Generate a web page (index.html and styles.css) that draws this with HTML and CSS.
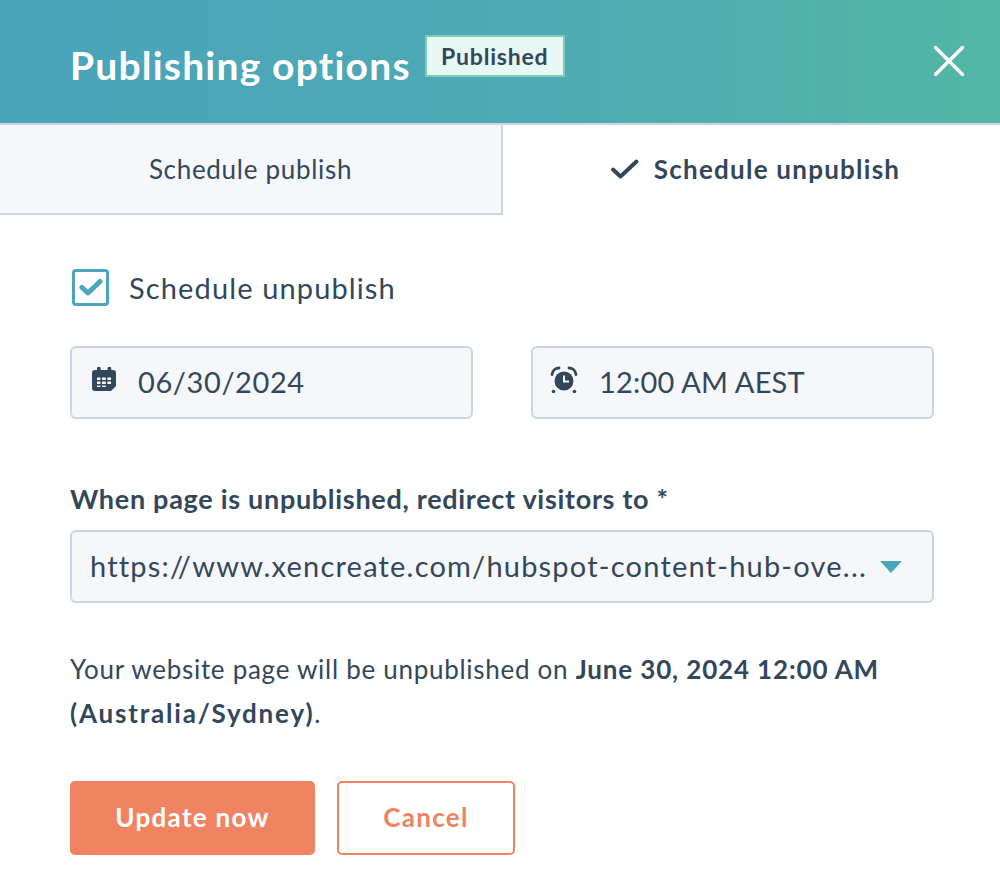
FILE: index.html
```html
<!DOCTYPE html>
<html lang="en">
<head>
<meta charset="utf-8">
<title>Publishing options</title>
<link rel="stylesheet" href="styles.css">
</head>
<body>
<div class="modal">
  <header class="header">
    <h1 class="title">Publishing options</h1>
    <span class="badge">Published</span>
    <svg class="close" viewBox="0 0 30 30" width="30" height="30"><path d="M1.5 1.5L28.5 28.5M28.5 1.5L1.5 28.5" fill="none" stroke="#fff" stroke-width="3.4" stroke-linecap="round"/></svg>
  </header>
  <nav class="tabs">
    <div class="tab tab-inactive">Schedule publish</div>
    <div class="tab tab-active">
      <svg class="tab-check" viewBox="0 0 30 22" width="30" height="22"><path d="M3 11.5L10.5 18.5L26.5 3.5" fill="none" stroke="#33475b" stroke-width="4" stroke-linecap="round" stroke-linejoin="round"/></svg>
      <span>Schedule unpublish</span>
    </div>
  </nav>
  <main class="content">
    <label class="check-row">
      <span class="checkbox">
        <svg viewBox="0 0 24 20" width="24" height="20"><path d="M3 10.5L9 16L21 4.5" fill="none" stroke="#4aa5bd" stroke-width="5" stroke-linecap="round" stroke-linejoin="round"/></svg>
      </span>
      <span class="check-label">Schedule unpublish</span>
    </label>
    <div class="inputs">
      <div class="field">
        <svg class="field-icon" viewBox="0 0 26 26" width="26" height="26"><path fill-rule="evenodd" fill="#33475b" d="M6 1.5a1.8 1.8 0 0 1 3.6 0V3h7V1.500a1.800 1.800 0 0 1 3.600 0V3H22a3 3 0 0 1 3 3v13l-5 5H4a3 3 0 0 1-3-3V6a3 3 0 0 1 3-3h2ZM6 10.500V13h3.500v-2.500ZM11 10.500V13h3.800v-2.500ZM16.300 10.500V13H20v-2.500ZM6 14.500V17h3.500v-2.500ZM11 14.500V17h3.800v-2.500ZM16.300 14.500V17H20v-2.500ZM6 18.500v1.500h3.500v-1.500ZM11 18.500v1.500h3.800v-1.500Z"/></svg>
        <span>06/30/2024</span>
      </div>
      <div class="field field-time">
        <svg class="field-icon" viewBox="0 0 28 28" width="28" height="28"><circle cx="14" cy="15" r="9.500" fill="#33475b"/><path d="M14 9.500V15.500H19" fill="none" stroke="#f6f7fa" stroke-width="2"/><path d="M2 8.500C2.500 4.500 5.500 2 9 2M26 8.500C25.500 4.500 22.500 2 19 2" fill="none" stroke="#33475b" stroke-width="2.800" stroke-linecap="round"/><circle cx="3.500" cy="25.500" r="1.800" fill="#33475b"/><circle cx="24.500" cy="25.500" r="1.800" fill="#33475b"/></svg>
        <span>12:00 AM AEST</span>
      </div>
    </div>
    <div class="field-label">When page is unpublished, redirect visitors to *</div>
    <div class="select">
      <span class="select-value">https://www.xencreate.com/hubspot-content-hub-ove...</span>
      <span class="caret"></span>
    </div>
    <p class="note">Your website page will be unpublished on <strong class="when">June 30, 2024 12:00 AM</strong> <strong class="place">(Australia/Sydney)</strong>.</p>
    <div class="actions">
      <button class="btn btn-primary" type="button">Update now</button>
      <button class="btn btn-secondary" type="button">Cancel</button>
    </div>
  </main>
</div>
</body>
</html>
```

FILE: styles.css
```css
* { box-sizing: border-box; }
html, body { margin: 0; padding: 0; background: #fff; }
body {
  font-family: "Lato", "Noto Sans", sans-serif;
  color: #33475b;
  height: 895px;
  overflow: hidden;
}
.header {
  height: 125px;
  border-bottom: 2px solid #cbd6e2;
  background: linear-gradient(to right, #4aa4bb 0%, #4ea9b4 50%, #53b6a6 100%);
  padding: 0 36px 0 70px;
  display: flex;
  align-items: flex-start;
}
.title {
  margin: 42px 14px 0 0;
  font-size: 39px;
  line-height: 46px;
  font-weight: 700;
  letter-spacing: 1.2px;
  color: #fff;
  white-space: nowrap;
}
.badge {
  margin-top: 35px;
  height: 42px;
  width: 140px;
  border: 2px solid #78cdb5;
  background: #e8f6f6;
  font-size: 23px;
  font-weight: 700;
  letter-spacing: 0.8px;
  line-height: 38px;
  text-align: center;
}
.close { margin: 46px 0 0 auto; }
.tabs { display: flex; height: 90px; }
.tab {
  width: 50%;
  display: flex;
  align-items: center;
  justify-content: center;
  font-size: 26px;
}
.tab-inactive {
  width: 503px;
  background: #f6f7fa;
  border-right: 2px solid #cbd6e2;
  border-bottom: 2px solid #cbd6e2;
  letter-spacing: 0.7px;
}
.tab-active {
  flex: 1;
  font-weight: 700;
  letter-spacing: 1.25px;
  gap: 14px;
  padding: 0 0 2px 7px;
}
.content { padding: 54px 66px 0 70px; }
.check-row { display: flex; align-items: center; height: 36px; }
.checkbox {
  width: 37px;
  height: 37px;
  margin-left: 2px;
  border: 3px solid #4aa5bd;
  border-radius: 4px;
  display: flex;
  align-items: center;
  justify-content: center;
}
.check-label { margin-left: 20px; font-size: 29px; letter-spacing: 1.13px; }
.inputs { display: flex; justify-content: space-between; margin-top: 41px; }
.field {
  width: 403px;
  height: 73px;
  background: #f6f7fa;
  border: 2px solid #cbd6e2;
  border-radius: 6px;
  display: flex;
  align-items: center;
  padding: 0 0 2px 19px;
  gap: 21px;
  font-size: 29px;
  letter-spacing: 0.6px;
}
.field-time { padding-left: 17px; letter-spacing: 0.2px; }
.field-icon { flex: none; margin-top: -4px; }
.field-label {
  margin-top: 65px;
  height: 30px;
  font-size: 27px;
  line-height: 30px;
  font-weight: 700;
  letter-spacing: 0.7px;
}
.select {
  margin-top: 16px;
  height: 73px;
  background: #f6f7fa;
  border: 2px solid #cbd6e2;
  border-radius: 6px;
  display: flex;
  align-items: center;
  padding: 0 30px 2px 18px;
  font-size: 29px;
  letter-spacing: 1.2px;
}
.select-value { flex: 1; white-space: nowrap; overflow: hidden; }
.caret {
  width: 0;
  height: 0;
  margin-top: 2px;
  border-left: 11px solid transparent;
  border-right: 11px solid transparent;
  border-top: 12px solid #4aa5bd;
}
.note {
  margin: 44px 0 0;
  font-size: 26px;
  line-height: 44px;
  letter-spacing: 0.72px;
}
.when { letter-spacing: 0.85px; }
.place { display: inline-block; letter-spacing: 1.8px; }
.actions { display: flex; gap: 22px; margin-top: 46px; }
.btn {
  height: 74px;
  border-radius: 5px;
  font-family: inherit;
  font-size: 26px;
  font-weight: 700;
  letter-spacing: 1.3px;
  padding: 0 0 2px;
}
.btn-primary { width: 245px; background: #f08361; border: 2px solid #f08361; color: #fff; }
.btn-secondary { width: 178px; background: #fff; border: 2px solid #f08361; color: #f08361; }
```
